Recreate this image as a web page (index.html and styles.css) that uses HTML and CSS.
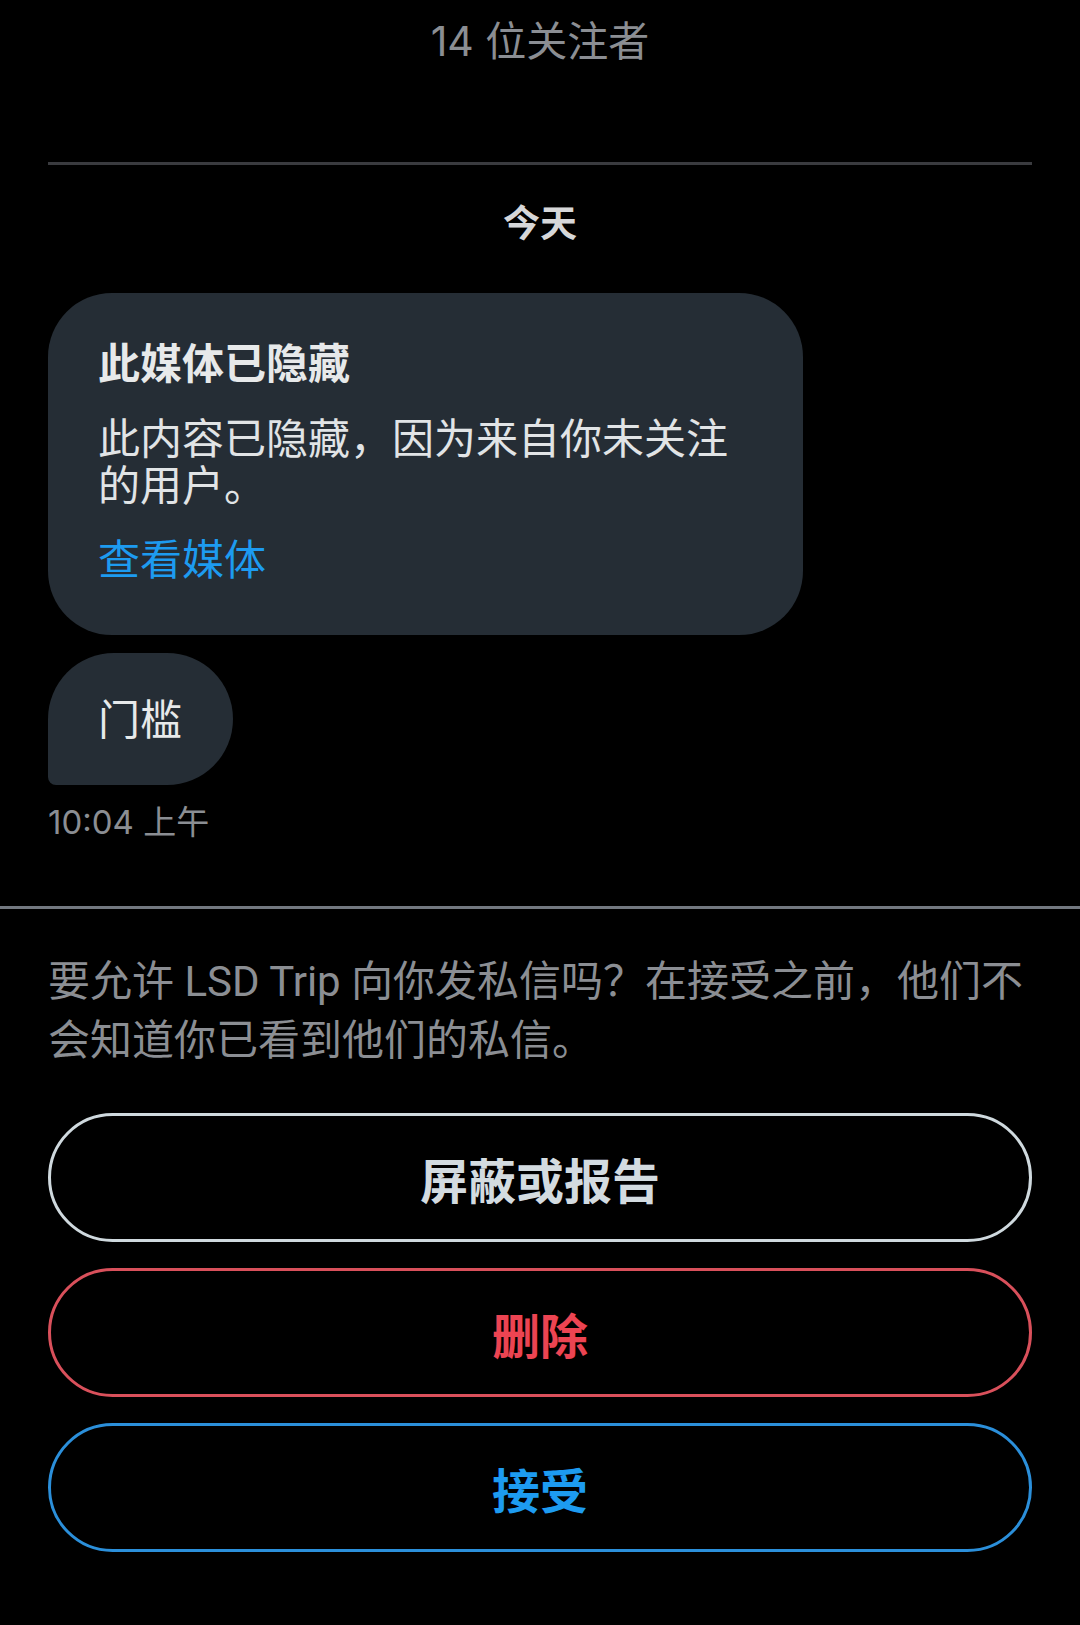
FILE: index.html
```html
<!DOCTYPE html>
<html lang="zh-CN">
<head>
<meta charset="utf-8">
<title>私信请求</title>
<link rel="stylesheet" href="styles.css">
</head>
<body>
<div class="page">
  <div class="followers">14 位关注者</div>
  <div class="rule-top"></div>
  <div class="day">今天</div>
  <div class="messages">
    <div class="bubble bubble-media">
      <div class="media-title">此媒体已隐藏</div>
      <div class="media-text">此内容已隐藏，因为来自你未关注的用户。</div>
      <div class="media-link">查看媒体</div>
    </div>
    <div class="bubble bubble-text">门槛</div>
    <div class="time">10:04 上午</div>
  </div>
  <div class="rule-bottom"></div>
  <div class="request">
    <p class="request-text">要允许 LSD Trip 向你发私信吗？在接受之前，他们不会知道你已看到他们的私信。</p>
    <div class="actions">
      <div class="btn btn-block">屏蔽或报告</div>
      <div class="btn btn-delete">删除</div>
      <div class="btn btn-accept">接受</div>
    </div>
  </div>
</div>
</body>
</html>
```

FILE: styles.css
```css
html, body {
  margin: 0;
  padding: 0;
  background: #000;
}
body {
  width: 1080px;
  height: 1625px;
  overflow: hidden;
  font-family: "Inter", "Noto Sans CJK SC", sans-serif;
  color: #e7e9ea;
}
.page {
  display: flex;
  flex-direction: column;
}
.followers {
  padding-top: 17px;
  font-size: 41px;
  line-height: 48px;
  text-align: center;
  color: #8b8e93;
}
.rule-top {
  margin: 97px 48px 0;
  height: 3px;
  background: #3a3b3f;
}
.day {
  margin-top: 36px;
  font-size: 37px;
  line-height: 46px;
  font-weight: 700;
  text-align: center;
  color: #d6d7d9;
}
.messages {
  display: flex;
  flex-direction: column;
  align-items: flex-start;
  padding: 0 48px;
  margin-top: 46px;
}
.bubble {
  background: #252d35;
  color: #e7e9ea;
  font-size: 42px;
  line-height: 47px;
}
.bubble-media {
  box-sizing: border-box;
  width: 755px;
  border-radius: 64px;
  padding: 47px 50px 52px;
}
.media-title {
  font-weight: 700;
}
.media-text {
  margin-top: 28px;
  color: #e1e4e6;
}
.media-link {
  margin-top: 27px;
  color: #1d9bf0;
}
.bubble-text {
  margin-top: 18px;
  padding: 43px 51px 42px 50px;
  border-radius: 66px 66px 66px 8px;
}
.time {
  margin-top: 17px;
  font-size: 33px;
  line-height: 40px;
  color: #8b8e93;
}
.rule-bottom {
  margin-top: 64px;
  height: 3px;
  background: #737880;
}
.request {
  padding: 0 48px;
}
.request-text {
  margin: 43px -10px 0 0;
  font-family: "Roboto", "Noto Sans CJK SC", sans-serif;
  font-size: 42px;
  line-height: 59px;
  color: #8b8e93;
}
.actions {
  display: flex;
  flex-direction: column;
  gap: 26px;
  margin-top: 43px;
}
.btn {
  box-sizing: border-box;
  height: 129px;
  border: 3px solid #cfd9de;
  border-radius: 65px;
  display: flex;
  align-items: center;
  justify-content: center;
  font-size: 48px;
  font-weight: 700;
}
.btn-block {
  color: #d3dbe0;
  border-color: #cfd9de;
}
.btn-delete {
  color: #ec4452;
  border-color: #d9505b;
}
.btn-accept {
  color: #1d9bf0;
  border-color: #2b8fda;
}
```
